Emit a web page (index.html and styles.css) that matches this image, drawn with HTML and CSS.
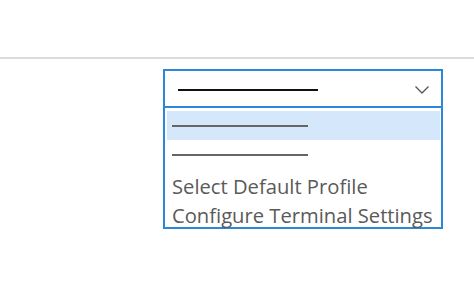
FILE: index.html
```html
<!DOCTYPE html>
<html lang="en">

<head>
  <meta charset="UTF-8">
  <meta name="viewport" content="width=device-width, initial-scale=1.0">
  <title>Terminal Profiles</title>
  <link rel="stylesheet" href="styles.css">
</head>

<body>
  <div class="top-bar"></div>

  <div class="panel">
    <div class="dropdown">
      <!-- Closed select header -->
      <div class="dropdown-head">
        <span class="head-value"></span>
        <svg class="chevron" width="14" height="8" viewBox="0 0 14 8">
          <polyline points="0.5,0.5 7,7 13.5,0.5" fill="none" stroke="#555" stroke-width="1.3" />
        </svg>
      </div>

      <!-- Open option list -->
      <ul class="dropdown-list">
        <li class="option selected"><span class="placeholder"></span></li>
        <li class="option"><span class="placeholder"></span></li>
        <li class="option text">Select Default Profile</li>
        <li class="option text">Configure Terminal Settings</li>
      </ul>
    </div>
  </div>
</body>

</html>
```

FILE: styles.css
```css
body {
  margin: 0;
  padding: 0;
  background-color: #fff;
  font-family: 'Open Sans', 'Noto Sans', sans-serif;
  color: #5a5a5a;
}

.top-bar {
  height: 57px;
  border-bottom: 2px solid #dcdcdc;
}

.panel {
  display: flex;
  padding: 10px 0 0 163px;
}

.dropdown {
  width: 280px;
}

.dropdown-head {
  box-sizing: border-box;
  height: 39px;
  border: 2px solid #2b88d8;
  display: flex;
  align-items: center;
  justify-content: space-between;
  padding: 3px 12px 0 13px;
}

.head-value {
  display: block;
  width: 140px;
  height: 2px;
  background-color: #111;
}

.chevron {
  display: block;
}

.dropdown-list {
  list-style: none;
  margin: 0;
  padding: 3px 1px 0 2px;
  border: 2px solid #2b88d8;
  border-top: none;
}

.option {
  box-sizing: border-box;
  height: 29px;
  display: flex;
  align-items: center;
  padding-left: 5px;
  font-size: 20.2px;
  white-space: nowrap;
}

.option.text {
  padding-top: 5px;
}

.option.selected {
  background-color: #d5e8fb;
}

.placeholder {
  display: block;
  width: 136px;
  height: 2px;
  background-color: #666;
}
```
